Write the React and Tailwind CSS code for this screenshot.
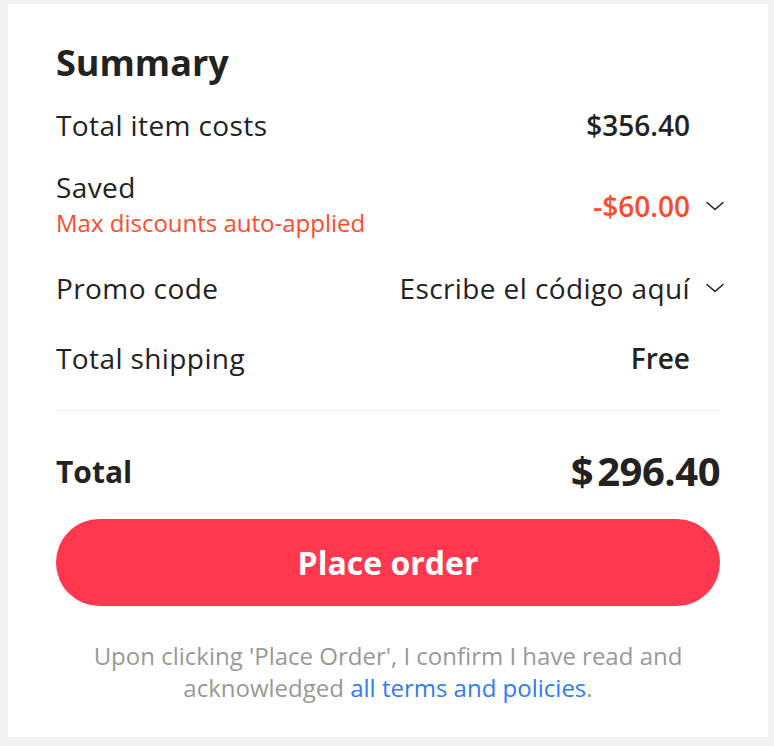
import React from 'react';

const Chevron = () => (
  <svg
    viewBox="0 0 24 24"
    className="w-[24px] h-[24px] ml-[13px] -mr-[7px] text-[#222]"
    fill="none"
    stroke="currentColor"
    strokeWidth="1.6"
    strokeLinecap="round"
    strokeLinejoin="round"
  >
    <polyline points="4,8.5 12,15.5 20,8.5" />
  </svg>
);

const App = () => {
  return (
    <div className="min-h-screen bg-[#f2f2f2] pt-[4px] px-[8px] font-['Open_Sans',sans-serif] text-[#222]">
      <div className="w-[760px] h-[733px] bg-white px-[48px] pt-[39px]">
        {/* Header */}
        <h1 className="h-[40px] leading-[40px] text-[36px] font-bold">Summary</h1>

        {/* Total item costs */}
        <div className="mt-[22px] h-[40px] flex items-center justify-between">
          <span className="text-[28px] font-medium tracking-[0.4px]">Total item costs</span>
          <span className="text-[28px] font-semibold pr-[30px]">$356.40</span>
        </div>

        {/* Saved */}
        <div className="mt-[23px] h-[72px] flex items-center justify-between">
          <div className="flex flex-col">
            <span className="text-[28px] font-medium leading-[38px] tracking-[0.4px]">Saved</span>
            <span className="text-[24px] leading-[34px] text-[#fd4b2c]">Max discounts auto-applied</span>
          </div>
          <div className="flex items-center mt-[4px]">
            <span className="text-[28px] font-semibold text-[#fd4b2c]">-$60.00</span>
            <Chevron />
          </div>
        </div>

        {/* Promo code */}
        <div className="mt-[28px] h-[40px] flex items-center justify-between">
          <span className="text-[28px] font-medium tracking-[0.4px]">Promo code</span>
          <div className="flex items-center">
            <span className="text-[28px] font-medium tracking-[0.4px]">Escribe el código aquí</span>
            <Chevron />
          </div>
        </div>

        {/* Total shipping */}
        <div className="mt-[30px] h-[40px] flex items-center justify-between">
          <span className="text-[28px] font-medium tracking-[0.4px]">Total shipping</span>
          <span className="text-[28px] font-semibold pr-[30px]">Free</span>
        </div>

        <div className="mt-[32px] h-px bg-[#eeeeee]" />

        {/* Total */}
        <div className="mt-[36px] h-[48px] flex items-center justify-between">
          <span className="text-[30px] font-bold">Total</span>
          <span className="text-[40px] font-bold tracking-[-0.5px]">
            $<span className="ml-[4px]">296.40</span>
          </span>
        </div>

        <button className="mt-[24px] w-full h-[87px] rounded-full bg-[#ff3850] text-white text-[32px] font-bold">
          Place order
        </button>

        <p className="mt-[34px] text-center text-[24px] leading-[32px] text-[#999999]">
          Upon clicking 'Place Order', I confirm I have read and acknowledged{' '}
          <span className="text-[#2e7cf6]">all terms and policies</span>.
        </p>
      </div>
    </div>
  );
};

export default App;
